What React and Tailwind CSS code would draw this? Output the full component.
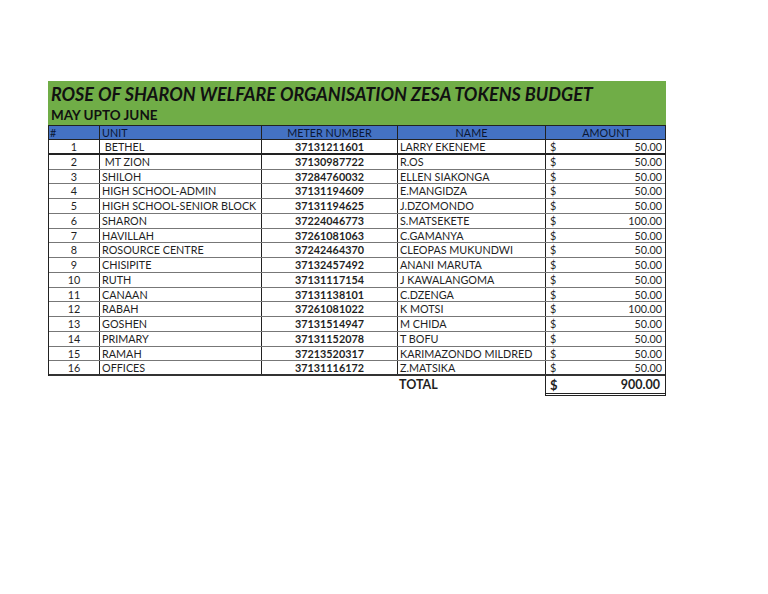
import React from "react";

const rows = [
  [1, " BETHEL", "37131211601", "LARRY EKENEME", "50.00"],
  [2, " MT ZION", "37130987722", "R.OS", "50.00"],
  [3, "SHILOH", "37284760032", "ELLEN SIAKONGA", "50.00"],
  [4, "HIGH SCHOOL-ADMIN", "37131194609", "E.MANGIDZA", "50.00"],
  [5, "HIGH SCHOOL-SENIOR BLOCK", "37131194625", "J.DZOMONDO", "50.00"],
  [6, "SHARON", "37224046773", "S.MATSEKETE", "100.00"],
  [7, "HAVILLAH", "37261081063", "C.GAMANYA", "50.00"],
  [8, "ROSOURCE CENTRE", "37242464370", "CLEOPAS MUKUNDWI", "50.00"],
  [9, "CHISIPITE", "37132457492", "ANANI MARUTA", "50.00"],
  [10, "RUTH", "37131117154", "J KAWALANGOMA", "50.00"],
  [11, "CANAAN", "37131138101", "C.DZENGA", "50.00"],
  [12, "RABAH", "37261081022", "K MOTSI", "100.00"],
  [13, "GOSHEN", "37131514947", "M CHIDA", "50.00"],
  [14, "PRIMARY", "37131152078", "T BOFU", "50.00"],
  [15, "RAMAH", "37213520317", "KARIMAZONDO MILDRED", "50.00"],
  [16, "OFFICES", "37131116172", "Z.MATSIKA", "50.00"],
];

const grid = "grid grid-cols-[51px_162px_136px_148px_121px]";

export default function App() {
  return (
    <div className="w-[768px] h-[594px] bg-white text-[#1f1f1f]" style={{ fontFamily: "Lato, 'Open Sans', sans-serif" }}>
      <div className="pt-[81px] pl-[48px]">
        <div className="w-[618px] h-[44px] bg-[#70ad47] flex flex-col pl-[3px]">
          <div className="text-[18px] leading-[24px] font-bold italic pt-[1px] text-[#111]">
            ROSE OF SHARON WELFARE ORGANISATION ZESA TOKENS BUDGET
          </div>
          <div className="text-[13.5px] leading-[17px] font-bold text-[#111] mt-[1px]">MAY UPTO JUNE</div>
        </div>
        <div className="w-[618px] border-l border-r border-[#222]">
          <div className={`${grid} h-[15px] bg-[#4472c4] border-t border-b border-[#222] text-[10.8px] leading-[13px] text-[#0b1733]`}>
            <div className="border-r border-[#222] pl-[1px]">#</div>
            <div className="border-r border-[#222] pl-[2px]">UNIT</div>
            <div className="border-r border-[#222] text-center">METER NUMBER</div>
            <div className="border-r border-[#222] text-center">NAME</div>
            <div className="text-center">AMOUNT</div>
          </div>
          {rows.map((r, i) => (
            <div
              key={r[0]}
              className={`${grid} h-[14.75px] text-[10.8px] leading-[13px] ${
                i === 0 ? "border-b-2 border-[#222]" : i === rows.length - 1 ? "border-b-2 border-[#333]" : "border-b border-[#777]"
              }`}
            >
              <div className="border-r border-[#222] text-center">{r[0]}</div>
              <div className="border-r border-[#222] pl-[2px] whitespace-pre">{r[1]}</div>
              <div className="border-r border-[#222] text-center font-bold">{r[2]}</div>
              <div className="border-r border-[#222] pl-[2px]">{r[3]}</div>
              <div className="flex justify-between pl-[4px] pr-[5px]">
                <span>$</span>
                <span>{r[4]}</span>
              </div>
            </div>
          ))}
        </div>
        <div className={`${grid} w-[618px] h-[19px] text-[12.5px] font-bold`}>
          <div></div>
          <div></div>
          <div></div>
          <div className="pl-[2px] pt-[1px] leading-[16px]">TOTAL</div>
          <div className="border-l border-r border-b-[3px] border-double border-[#222] flex justify-between pl-[4px] pr-[5px] leading-[16px] pt-[1px]">
            <span className="text-[13px]">$</span>
            <span>900.00</span>
          </div>
        </div>
      </div>
    </div>
  );
}
